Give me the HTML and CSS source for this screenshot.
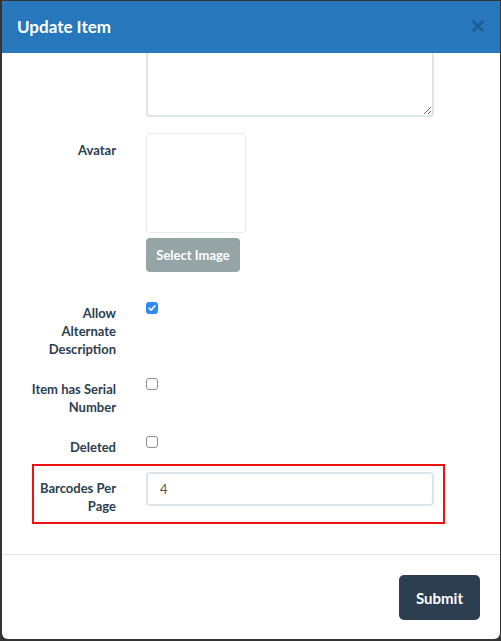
FILE: index.html
```html
<!DOCTYPE html>
<html lang="en">
<head>
<meta charset="utf-8">
<title>Update Item</title>
<link rel="stylesheet" href="styles.css">
</head>
<body>
<div class="modal">
  <div class="modal-header">
    <h4 class="modal-title">Update Item</h4>
    <button class="close" type="button" aria-label="Close">
      <svg width="12" height="12" viewBox="0 0 12 12"><path d="M1.5 1.5 L10.5 10.5 M10.5 1.5 L1.5 10.5" stroke="currentColor" stroke-width="2.6" stroke-linecap="round"/></svg>
    </button>
  </div>
  <div class="modal-body">
    <form class="form">
      <div class="row row-textarea">
        <div class="label-col"></div>
        <div class="control"><textarea class="textarea"></textarea></div>
      </div>
      <div class="row row-avatar">
        <label class="label">Avatar</label>
        <div class="control">
          <div class="avatar-box"></div>
          <button class="btn btn-default" type="button">Select Image</button>
        </div>
      </div>
      <div class="row row-check">
        <label class="label">Allow Alternate Description</label>
        <div class="control"><span class="checkbox checked"><svg width="12" height="12" viewBox="0 0 12 12"><path d="M3.2 6.2 L5.1 8.1 L8.9 3.9" fill="none" stroke="#fff" stroke-width="1.6" stroke-linecap="round" stroke-linejoin="round"/></svg></span></div>
      </div>
      <div class="row row-check">
        <label class="label">Item has Serial Number</label>
        <div class="control"><span class="checkbox"></span></div>
      </div>
      <div class="row row-check row-last">
        <label class="label">Deleted</label>
        <div class="control"><span class="checkbox"></span></div>
      </div>
      <div class="row row-highlight">
        <label class="label">Barcodes Per Page</label>
        <div class="control"><input class="input" type="text" value="4"></div>
      </div>
    </form>
  </div>
  <div class="modal-footer">
    <button class="btn btn-primary" type="button">Submit</button>
  </div>
</div>
</body>
</html>
```
FILE: styles.css
```css
html, body {
  margin: 0;
  padding: 0;
}
body {
  background: #343434;
  font-family: Lato, "Open Sans", "Liberation Sans", sans-serif;
  width: 501px;
  height: 641px;
  overflow: hidden;
}
.modal {
  margin: 1px 0 0 2px;
  width: 498px;
  height: 638px;
  background: #fff;
  border-radius: 3px 3px 6px 6px;
  overflow: hidden;
  display: flex;
  flex-direction: column;
}
.modal-header {
  height: 52px;
  flex: none;
  background: #2677bb;
  display: flex;
  align-items: center;
  justify-content: space-between;
  padding: 0 16px 0 15px;
  box-sizing: border-box;
}
.modal-title {
  margin: 0;
  font-size: 17px;
  font-weight: 700;
  color: #fff;
  line-height: 20px;
}
.close {
  border: 0;
  background: none;
  padding: 0;
  margin: 0 0 3px 0;
  color: #1e5e95;
  display: flex;
}
.modal-body {
  flex: 1;
  padding: 0 0 30px 29px;
}
.form {
  display: flex;
  flex-direction: column;
}
.row {
  display: grid;
  grid-template-columns: 85px 288px;
  column-gap: 30px;
  align-items: start;
}
.label {
  text-align: right;
  font-weight: 700;
  font-size: 13px;
  line-height: 18px;
  color: #2c3e50;
  padding-top: 8px;
}
.control {
  display: flex;
  flex-direction: column;
  align-items: flex-start;
}
.row-textarea {
  margin-bottom: 16px;
}
.textarea {
  display: block;
  width: 288px;
  height: 64px;
  box-sizing: border-box;
  border: 2px solid #dce4ec;
  border-top: 0;
  border-radius: 0 0 4px 4px;
  resize: vertical;
  margin: 0;
  padding: 0;
  font-family: inherit;
}
.row-avatar {
  margin-bottom: 24px;
}
.avatar-box {
  width: 100px;
  height: 100px;
  box-sizing: border-box;
  border: 1px solid #e6eaee;
  border-radius: 4px;
}
.btn {
  border: 0;
  font-family: inherit;
  font-weight: 700;
  color: #fff;
  cursor: pointer;
}
.btn-default {
  margin-top: 5px;
  height: 34px;
  width: 94px;
  padding: 0;
  background: #95a5a6;
  border-radius: 4px;
  font-size: 13px;
}
.row-check {
  margin-bottom: 14px;
}
.row-last {
  margin-bottom: 8px;
}
.checkbox {
  margin-top: 6px;
  width: 12px;
  height: 12px;
  box-sizing: border-box;
  border: 1px solid #8f8f8f;
  border-radius: 3px;
  background: #fff;
  display: flex;
}
.checkbox.checked {
  border: 0;
  background: #2f89f2;
}
.row-highlight {
  margin-left: 1px;
  width: 413px;
  box-sizing: border-box;
  border: 2px solid #ee1111;
  padding: 6px 9px 7px 0;
  grid-template-columns: 82px 288px;
}
.row-highlight .label {
  padding-top: 7px;
}
.input {
  width: 288px;
  height: 34px;
  box-sizing: border-box;
  border: 2px solid #dce4ec;
  border-radius: 4px;
  padding: 0 12px;
  margin: 0;
  font-family: inherit;
  font-size: 13px;
  color: #555;
  outline: none;
}
.modal-footer {
  flex: none;
  border-top: 1px solid #e5e5e5;
  padding: 20px 20px 19px;
  display: flex;
  justify-content: flex-end;
}
.btn-primary {
  width: 81px;
  height: 45px;
  background: #2c3e50;
  border-radius: 5px;
  font-size: 15px;
  padding: 0;
}
```
